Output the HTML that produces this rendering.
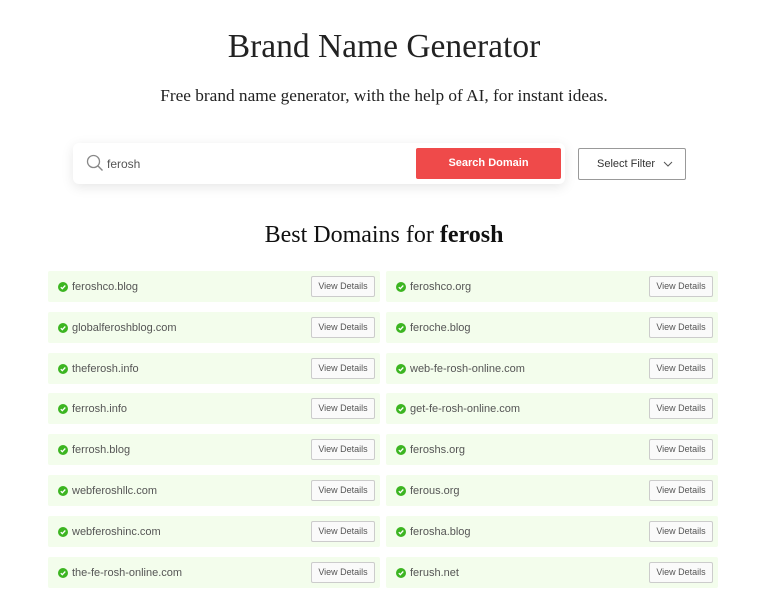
<!DOCTYPE html>
<html><head><style>
body{margin:0;width:768px;height:595px;background:#fff;font-family:"Liberation Sans",sans-serif;position:relative;overflow:hidden}
.a{position:absolute}
h1{position:absolute;top:28px;left:0;width:768px;text-align:center;margin:0;font:400 33.5px "Liberation Serif",serif;color:#222}
.sub{top:86px;left:0;width:768px;text-align:center;font:17.3px "Liberation Serif",serif;color:#222}
.box{left:73px;top:143px;width:492px;height:41px;background:#fff;border-radius:6px;box-shadow:0 3px 12px rgba(0,0,0,.1)}
.btn{left:416px;top:148px;width:145px;height:31px;background:#ef4a4a;border-radius:2px;color:#fff;font-size:11px;font-weight:bold;text-align:center;line-height:31px}
.flt{left:578px;top:148px;width:106px;height:30px;border:1px solid #999;border-radius:2px;font-size:11px;color:#333;line-height:30px}
h2{position:absolute;top:222px;left:0;width:768px;text-align:center;margin:0;font:400 24px "Liberation Serif",serif;color:#111}
.row{position:absolute;width:332px;height:31px;background:#f3fdec;border-radius:2px}
.row .c{position:absolute;left:10px;top:11px;width:10px;height:10px;border-radius:50%;background:#3cb521}
.row .c svg{position:absolute;left:0;top:0}
.row .t{position:absolute;left:24px;top:1px;line-height:31px;font-size:11px;color:#555}
.row .v{position:absolute;right:5px;top:5px;width:62px;height:19px;border:1px solid #ccc;border-radius:2px;background:#fafafa;font-size:9px;color:#555;text-align:center;line-height:19px}
</style></head><body>
<h1>Brand Name Generator</h1>
<div class="a sub">Free brand name generator, with the help of AI, for instant ideas.</div>
<div class="a box">
<svg class="a" style="left:13px;top:11px" width="18" height="18" viewBox="0 0 18 18"><circle cx="7.5" cy="7.5" r="6" fill="none" stroke="#888" stroke-width="1.3"/><path d="M12 12l4.5 4.5" stroke="#888" stroke-width="1.4"/></svg>
<div class="a" style="left:34px;top:14px;font-size:12px;color:#555">ferosh</div>
</div>
<div class="a btn">Search Domain</div>
<div class="a flt"><span style="margin-left:18px">Select Filter</span>
<svg class="a" style="left:84px;top:11px" width="10" height="8" viewBox="0 0 10 8"><path d="M1 2l4 4 4-4" fill="none" stroke="#555" stroke-width="1"/></svg></div>
<h2>Best Domains for <b>ferosh</b></h2>
<div id="rows"></div>
<script>
var L=["feroshco.blog","globalferoshblog.com","theferosh.info","ferrosh.info","ferrosh.blog","webferoshllc.com","webferoshinc.com","the-fe-rosh-online.com"];
var R=["feroshco.org","feroche.blog","web-fe-rosh-online.com","get-fe-rosh-online.com","feroshs.org","ferous.org","ferosha.blog","ferush.net"];
var h="";
for(var i=0;i<8;i++){[[48,L[i]],[386,R[i]]].forEach(function(p){
h+='<div class="row" style="left:'+p[0]+'px;top:'+(271+i*40.8)+'px"><div class="c"><svg width="10" height="10" viewBox="0 0 10 10"><path d="M2.8 5.2l1.5 1.5 3-3.2" fill="none" stroke="#fff" stroke-width="1.3"/></svg></div><div class="t">'+p[1]+'</div><div class="v">View Details</div></div>';});}
document.getElementById("rows").innerHTML=h;
</script>
</body></html>
